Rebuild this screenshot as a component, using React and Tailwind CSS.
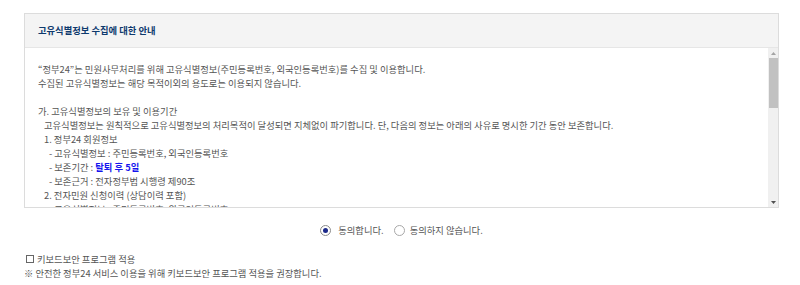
import React from "react";

const font = { fontFamily: '"Noto Sans CJK KR", "Noto Sans", sans-serif' };

export default function App() {
  return (
    <div className="w-[800px] h-[285px] bg-white overflow-hidden pt-[13px]" style={font}>
      {/* notice box */}
      <div className="ml-[24px] w-[755px] border border-[#dcdcdc]">
        <div className="h-[34px] bg-[#f4f4f4] border-b border-[#e6e6e6] flex items-center pl-[13px]">
          <h2 className="text-[9.3px] font-bold text-[#0e3a6e]">
            고유식별정보 수집에 대한 안내
          </h2>
        </div>

        <div className="flex h-[159px]">
          <div className="flex-1 overflow-hidden pl-[13px] pt-[14px] text-[9.3px] leading-[14px] text-[#555]">
            <p>“정부24”는 민원사무처리를 위해 고유식별정보(주민등록번호, 외국인등록번호)를 수집 및 이용합니다.</p>
            <p>수집된 고유식별정보는 해당 목적이외의 용도로는 이용되지 않습니다.</p>
            <p>&nbsp;</p>
            <p>가. 고유식별정보의 보유 및 이용기간</p>
            <p className="pl-[6px]">
              고유식별정보는 원칙적으로 고유식별정보의 처리목적이 달성되면 지체없이 파기합니다. 단, 다음의 정보는 아래의 사유로 명시한 기간 동안 보존합니다.
            </p>
            <p className="pl-[6px]">1. 정부24 회원정보</p>
            <p className="pl-[11px]">- 고유식별정보 : 주민등록번호, 외국인등록번호</p>
            <p className="pl-[11px]">
              - 보존기간 : <strong className="text-[#1515ee] font-bold">탈퇴 후 5일</strong>
            </p>
            <p className="pl-[11px]">- 보존근거 : 전자정부법 시행령 제90조</p>
            <p className="pl-[6px]">2. 전자민원 신청이력 (상담이력 포함)</p>
            <p className="pl-[11px] whitespace-nowrap">- 고유식별정보 : 주민등록번호, 외국인등록번호</p>
          </div>

          {/* scrollbar */}
          <div className="w-[10px] bg-[#f0f0f0] flex flex-col items-center">
            <div className="h-[10px] flex items-center justify-center">
              <svg width="5" height="3" viewBox="0 0 5 3">
                <path d="M2.5 0 L5 3 L0 3 Z" fill="#a3a3a3" />
              </svg>
            </div>
            <div className="w-[9px] h-[50px] bg-[#c1c1c1]" />
            <div className="flex-1" />
            <div className="h-[10px] flex items-center justify-center">
              <svg width="5" height="3" viewBox="0 0 5 3">
                <path d="M0 0 L5 0 L2.5 3 Z" fill="#505050" />
              </svg>
            </div>
          </div>
        </div>
      </div>

      {/* agree radios */}
      <div className="mt-[15px] ml-[24px] w-[755px] flex justify-center items-center gap-[10px] text-[9.3px] leading-[14px] text-[#555]">
        <label className="flex items-center gap-[7px]">
          <span className="w-[11px] h-[11px] rounded-full border border-[#8a8a8a] bg-white flex items-center justify-center">
            <span className="w-[5px] h-[5px] rounded-full bg-[#1c2a8a]" />
          </span>
          <span>동의합니다.</span>
        </label>
        <label className="flex items-center gap-[5px]">
          <span className="w-[11px] h-[11px] rounded-full border border-[#a8a8a8] bg-white" />
          <span>동의하지 않습니다.</span>
        </label>
      </div>

      {/* keyboard security */}
      <div className="mt-[15px] ml-[24px] text-[9.3px] leading-[14px] text-[#555]">
        <label className="flex items-center">
          <span className="ml-[2px] w-[8px] h-[8px] border border-[#666] bg-white" />
          <span className="ml-[3px]">키보드보안 프로그램 적용</span>
        </label>
        <p>※ 안전한 정부24 서비스 이용을 위해 키보드보안 프로그램 적용을 권장합니다.</p>
      </div>
    </div>
  );
}
